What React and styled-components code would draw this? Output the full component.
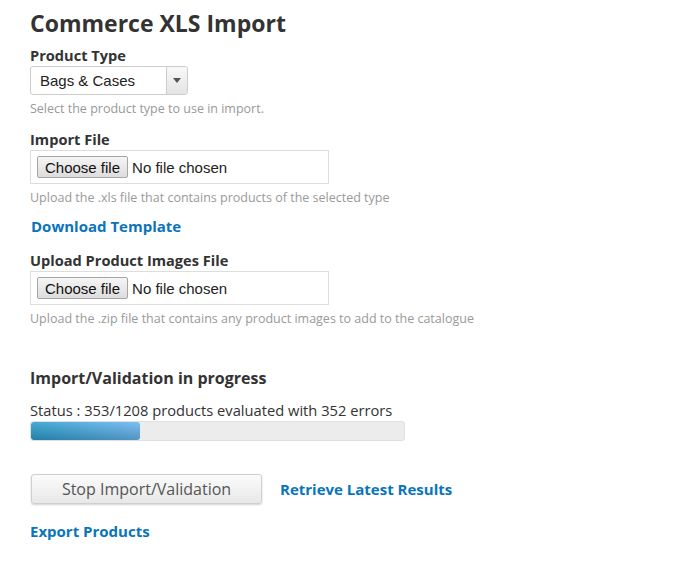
import React from "react";
import styled, { createGlobalStyle } from "styled-components";

const Global = createGlobalStyle`
  html, body { margin: 0; padding: 0; background: #fff; }
  body { font-family: "Open Sans", "Liberation Sans", sans-serif; color: #333; }
`;

const Page = styled.div`
  padding: 8px 30px 30px 30px;
  display: flex;
  flex-direction: column;
  align-items: flex-start;
`;

const Title = styled.h1`
  margin: 0 0 8px 0;
  font-size: 23px;
  line-height: 30px;
  font-weight: 700;
  color: #333;
`;

const Field = styled.div`
  display: flex;
  flex-direction: column;
  align-items: flex-start;
  margin-bottom: ${(p) => p.$mb || 12}px;
`;

const Label = styled.label`
  font-size: 14.6px;
  line-height: 18px;
  font-weight: 700;
  color: #333;
  margin-bottom: 2px;
`;

const Help = styled.div`
  font-size: 12.5px;
  line-height: 18px;
  color: #999;
  margin-top: 5px;
`;

const SelectWrap = styled.div`
  display: flex;
  width: 158px;
  height: 29px;
  box-sizing: border-box;
  border: 1px solid #ccc;
  border-radius: 3px;
  background: #fff;
  overflow: hidden;
`;

const NativeSelect = styled.select`
  flex: 1;
  min-width: 0;
  appearance: none;
  border: none;
  outline: none;
  background: transparent;
  font-family: "Liberation Sans", Arial, sans-serif;
  font-size: 15px;
  color: #222;
  padding: 0 0 0 9px;
  margin: 0;
`;

const Arrow = styled.span`
  width: 20px;
  border-left: 1px solid #ccc;
  background: linear-gradient(#f8f8f8, #e4e4e4);
  display: flex;
  align-items: center;
  justify-content: center;
  pointer-events: none;
  &::after {
    content: "";
    border-left: 4px solid transparent;
    border-right: 4px solid transparent;
    border-top: 5px solid #555;
  }
`;

const FileBox = styled.label`
  display: flex;
  align-items: center;
  gap: 4px;
  width: 299px;
  box-sizing: border-box;
  border: 1px solid #ddd;
  padding: 5px 6px;
  background: #fff;
  font-family: "Liberation Sans", Arial, sans-serif;
  font-size: 15px;
  color: #222;
  cursor: pointer;
`;

const HiddenFile = styled.input`
  display: none;
`;

const FileButton = styled.span`
  display: inline-flex;
  align-items: center;
  height: 22px;
  box-sizing: border-box;
  padding: 0 7px;
  border: 1px solid #a5a5a5;
  border-radius: 2px;
  background: linear-gradient(#f5f5f5, #dddddd);
  color: #111;
`;

const FileName = styled.span`
  color: #222;
`;

const Link = styled.a`
  font-size: 15px;
  line-height: 18px;
  font-weight: 700;
  color: #0a74bb;
  text-decoration: none;
  cursor: pointer;
  margin: ${(p) => p.$m || "0"};
`;

const SectionTitle = styled.h2`
  margin: 0 0 12px 0;
  font-size: 16px;
  line-height: 22px;
  font-weight: 700;
  color: #333;
`;

const Status = styled.div`
  font-size: 14.7px;
  line-height: 18px;
  color: #333;
  margin-bottom: 2px;
`;

const Track = styled.div`
  width: 375px;
  height: 20px;
  box-sizing: border-box;
  background: #ececec;
  border: 1px solid #e0e0e0;
  border-radius: 3px;
  overflow: hidden;
`;

const Fill = styled.div`
  height: 100%;
  border-radius: 3px;
  background:
    linear-gradient(to bottom, rgba(255,255,255,0.15), rgba(0,0,0,0.18)),
    linear-gradient(to right, #279bcb, #66b4ee);
`;

const Actions = styled.div`
  display: flex;
  align-items: center;
  gap: 18px;
  margin: 33px 0 18px 1px;
`;

const Button = styled.button`
  width: 231px;
  height: 30px;
  border: 1px solid #cfcfcf;
  border-radius: 3px;
  background: linear-gradient(#fbfbfb, #e8e8e8);
  box-shadow: 0 1px 2px rgba(0, 0, 0, 0.18);
  font-family: "Open Sans", sans-serif;
  font-size: 16px;
  color: #555;
  padding: 0;
  cursor: pointer;
`;

function FilePicker() {
  return (
    <FileBox>
      <HiddenFile type="file" />
      <FileButton>Choose file</FileButton>
      <FileName>No file chosen</FileName>
    </FileBox>
  );
}

export default function App() {
  const done = 353;
  const total = 1208;
  const pct = (done / total) * 100;
  return (
    <>
      <Global />
      <Page>
        <Title>Commerce XLS Import</Title>
        <Field>
          <Label>Product Type</Label>
          <SelectWrap>
            <NativeSelect defaultValue="bags">
              <option value="bags">Bags &amp; Cases</option>
            </NativeSelect>
            <Arrow />
          </SelectWrap>
          <Help>Select the product type to use in import.</Help>
        </Field>
        <Field $mb={10}>
          <Label>Import File</Label>
          <FilePicker />
          <Help>Upload the .xls file that contains products of the selected type</Help>
        </Field>
        <Link $m="0 0 16px 1px">Download Template</Link>
        <Field $mb={39}>
          <Label>Upload Product Images File</Label>
          <FilePicker />
          <Help>Upload the .zip file that contains any product images to add to the catalogue</Help>
        </Field>
        <SectionTitle>Import/Validation in progress</SectionTitle>
        <Status>Status : {done}/{total} products evaluated with 352 errors</Status>
        <Track>
          <Fill style={{ width: `${pct}%` }} />
        </Track>
        <Actions>
          <Button>Stop Import/Validation</Button>
          <Link>Retrieve Latest Results</Link>
        </Actions>
        <Link>Export Products</Link>
      </Page>
    </>
  );
}
